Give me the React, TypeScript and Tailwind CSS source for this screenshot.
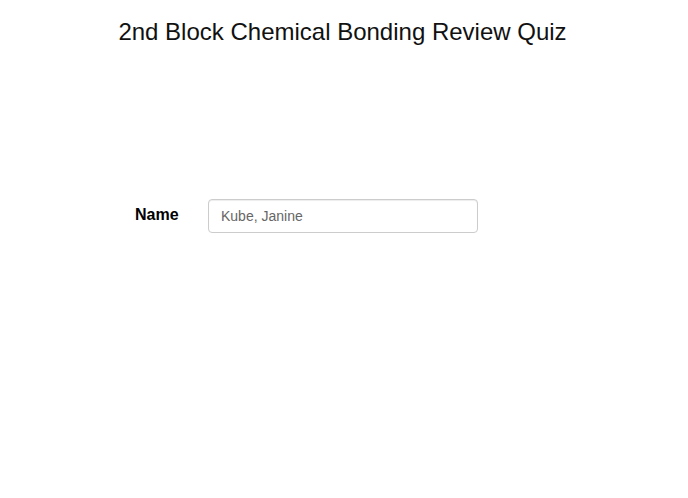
export default function App() {
  return (
    <div className="min-h-[498px] w-[688px] bg-white font-['Liberation_Sans',Arial,sans-serif] text-[#111]">
      <h1 className="pt-[17px] pr-[3px] text-center text-[24px] leading-[30px]">
        2nd Block Chemical Bonding Review Quiz
      </h1>
      <div className="mt-[152px] flex items-start pl-[135px]">
        <label className="w-[73px] pt-[6px] text-[16px] leading-[20px] font-bold text-black">Name</label>
        <input
          className="h-[34px] w-[270px] rounded-[4px] border border-[#ccc] px-[12px] text-[14px] text-[#666] shadow-[inset_0_1px_1px_rgba(0,0,0,0.075)] outline-none"
          defaultValue="Kube, Janine"
        />
      </div>
    </div>
  )
}
